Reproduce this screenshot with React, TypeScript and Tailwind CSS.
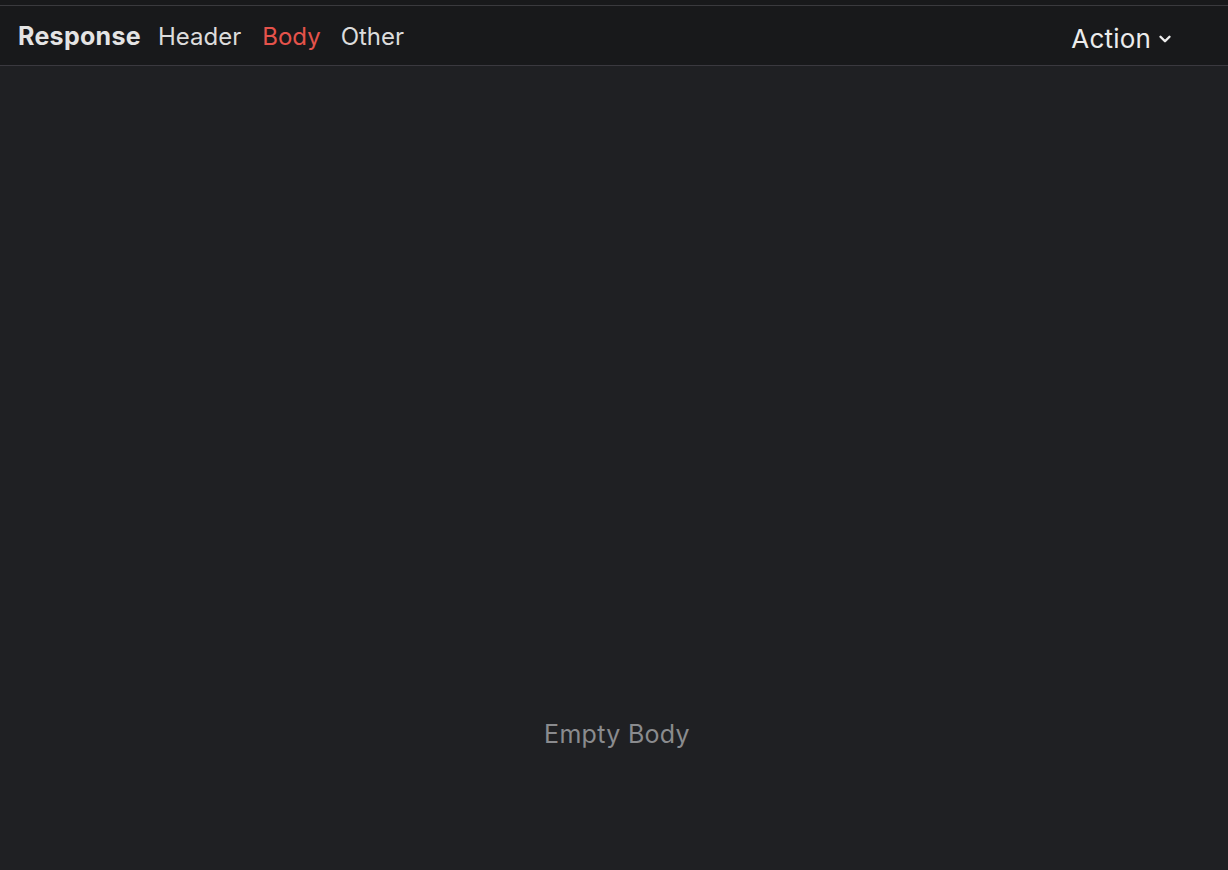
import { ChevronDown } from "lucide-react";

export default function App() {
  return (
    <div
      className="flex flex-col w-[1228px] h-[870px] bg-[#1f2023] overflow-hidden"
      style={{ fontFamily: "Inter, 'Noto Sans', sans-serif" }}
    >
      <div className="h-[5px] bg-[#18191b]" />
      <div className="h-px bg-[#3a3a3e]" />
      <div className="flex items-center justify-between h-[60px] bg-[#18191b] border-b border-[#3a393f] pl-[18px] pr-[54px]">
        <div className="flex items-center text-[24px] text-[#dcdcdc] mt-[2px]">
          <span className="font-bold text-[25px] tracking-[0.3px] text-[#e4e4e4]">Response</span>
          <span className="ml-[17px]">Header</span>
          <span className="ml-[21px] text-[#e5534b]">Body</span>
          <span className="ml-[20px]">Other</span>
        </div>
        <button className="flex items-center gap-[5px] text-[26px] tracking-[0.2px] text-[#ececec] mt-[5px]">
          Action
          <ChevronDown className="w-[18px] h-[18px] mt-[1px]" strokeWidth={3.2} />
        </button>
      </div>
      <div className="flex-1 flex items-end justify-center pb-[117px]">
        <span className="ml-[6px] text-[25px] tracking-[0.3px] text-[#8a8b8e]">Empty Body</span>
      </div>
    </div>
  );
}
